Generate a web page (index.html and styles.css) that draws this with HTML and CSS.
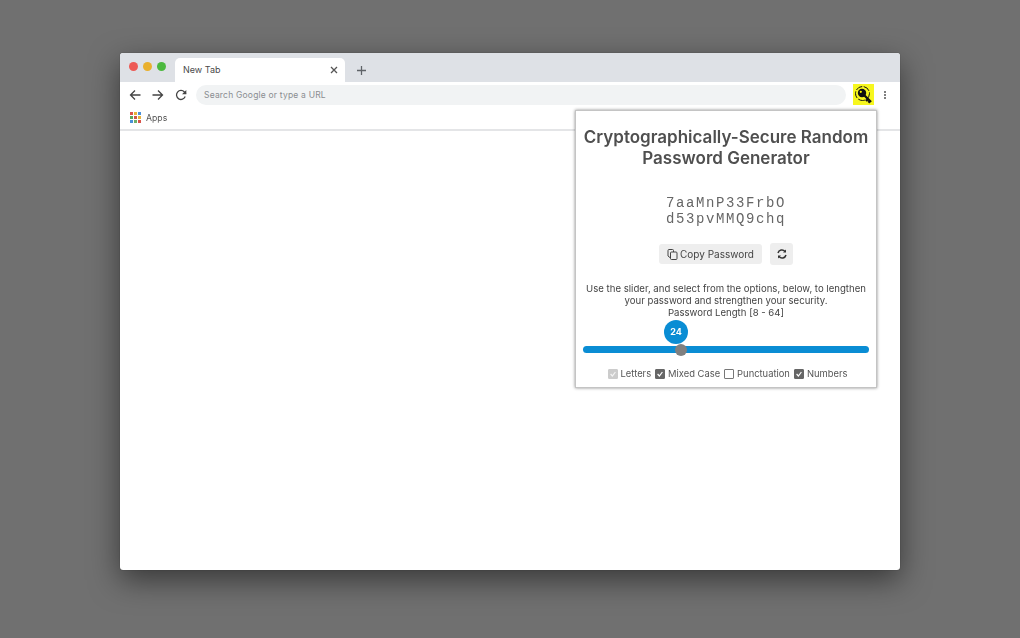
FILE: index.html
```html
<!DOCTYPE html>
<html lang="en">
<head>
    <meta charset="UTF-8">
    <meta name="viewport" content="width=device-width, initial-scale=1.0">
    <title>Password Generator</title>
    <link rel="stylesheet" href="styles.css">
</head>
<body>
    <div class="window">
        <div class="tabstrip">
            <div class="lights">
                <span class="light red"></span>
                <span class="light yellow"></span>
                <span class="light green"></span>
            </div>
            <div class="tab">
                <span class="tab-title">New Tab</span>
                <svg class="tab-close" width="8" height="8" viewBox="0 0 8 8"><path d="M1 1l6 6M7 1L1 7" stroke="#555" stroke-width="1.3"/></svg>
            </div>
            <svg class="new-tab" width="9" height="9" viewBox="0 0 10 10"><path d="M5 0v10M0 5h10" stroke="#5f6368" stroke-width="1.4"/></svg>
        </div>
        <div class="toolbar">
            <svg class="nav-icon" width="12" height="12" viewBox="0 0 12 12"><path d="M11.500 6H1.500M6 1.500L1.500 6 6 10.500" fill="none" stroke="#444" stroke-width="1.3"/></svg>
            <svg class="nav-icon" width="12" height="12" viewBox="0 0 12 12"><path d="M.5 6h10M6 1.500L10.500 6 6 10.500" fill="none" stroke="#444" stroke-width="1.3"/></svg>
            <svg class="nav-icon" width="12" height="12" viewBox="0 0 12 12"><path d="M10.200 7.600A4.500 4.500 0 1 1 9.400 3L11 4.600" fill="none" stroke="#444" stroke-width="1.3"/><path d="M11.300 .9v4.300H7z" fill="#444"/></svg>
            <div class="omnibox">Search Google or type a URL</div>
            <div class="ext-button">
                <svg width="20" height="20" viewBox="0 0 20 20">
                    <circle cx="8.500" cy="8.500" r="7" fill="none" stroke="#111" stroke-width="1" stroke-dasharray="7 1.500"/>
                    <circle cx="8" cy="8" r="4.200" fill="#111"/>
                    <path d="M10 10l7 7M14 14l-2 2M16 16l-1.600 1.600" stroke="#111" stroke-width="2.400" fill="none"/>
                    <circle cx="6.800" cy="6.800" r="1.100" fill="#ff0"/>
                </svg>
            </div>
            <div class="menu-dots"><span></span><span></span><span></span></div>
        </div>
        <div class="bookmarks">
            <div class="apps-grid">
                <span class="c1"></span><span class="c2"></span><span class="c3"></span>
                <span class="c4"></span><span class="c5"></span><span class="c2"></span>
                <span class="c3"></span><span class="c6"></span><span class="c1"></span>
            </div>
            <span class="apps-label">Apps</span>
        </div>
        <div class="popup">
            <h1 class="popup-title">Cryptographically-Secure Random Password Generator</h1>
            <div class="password">7aaMnP33FrbO<br>d53pvMMQ9chq</div>
            <div class="actions">
                <button class="btn btn-copy">
                    <svg width="11" height="11" viewBox="0 0 11 11"><rect x="3.500" y="3" width="6.500" height="7.500" rx="1" fill="none" stroke="#444"/><path d="M6.500 3V1.500A1 1 0 0 0 5.500 .5H2A1 1 0 0 0 1 1.500V7l2.500 2" fill="none" stroke="#444"/></svg>
                    Copy Password
                </button>
                <button class="btn btn-refresh">
                    <svg width="10" height="10" viewBox="0 0 10 10"><path d="M1 4a4 4 0 0 1 7-1.500M9 6a4 4 0 0 1-7 1.500" fill="none" stroke="#333" stroke-width="1.500"/><path d="M9 .5v3H6zM1 9.500v-3h3z" fill="#333"/></svg>
                </button>
            </div>
            <p class="help">Use the slider, and select from the options, below, to lengthen your password and strengthen your security.<br>Password Length [8 - 64]</p>
            <div class="slider">
                <div class="track"></div>
                <div class="thumb"></div>
                <div class="bubble">24</div>
            </div>
            <div class="options">
                <label class="option"><span class="box box-disabled"><svg width="10" height="10" viewBox="0 0 10 10"><path d="M2 5l2.200 2.500L8 2.500" fill="none" stroke="#f4f4f4" stroke-width="1.500"/></svg></span>Letters</label>
                <label class="option"><span class="box box-checked"><svg width="10" height="10" viewBox="0 0 10 10"><path d="M2 5l2.200 2.500L8 2.500" fill="none" stroke="#fff" stroke-width="1.500"/></svg></span>Mixed Case</label>
                <label class="option"><span class="box"></span>Punctuation</label>
                <label class="option"><span class="box box-checked"><svg width="10" height="10" viewBox="0 0 10 10"><path d="M2 5l2.200 2.500L8 2.500" fill="none" stroke="#fff" stroke-width="1.500"/></svg></span>Numbers</label>
            </div>
        </div>
    </div>
</body>
</html>
```

FILE: styles.css
```css
html, body {
    height: 100%;
}

body {
    margin: 0;
    background-color: #707070;
    font-family: 'Inter', 'Liberation Sans', sans-serif;
    overflow: hidden;
}

.window {
    position: relative;
    width: 780px;
    height: 517px;
    margin: 53px 0 0 120px;
    background-color: #fff;
    border-radius: 3px;
    box-shadow: 0 10px 30px rgba(0, 0, 0, 0.5), 0 0 1px #333;
    filter: blur(0.35px);
}

.tabstrip {
    display: flex;
    align-items: flex-end;
    height: 29px;
    background-color: #dee1e6;
    border-radius: 3px 3px 0 0;
}

.lights {
    display: flex;
    align-self: center;
    gap: 5px;
    margin: 0 0 2px 9px;
    width: 46px;
}

.light {
    width: 9px;
    height: 9px;
    border-radius: 50%;
}

.red { background-color: #ed5a55; }
.yellow { background-color: #e9b02d; }
.green { background-color: #4cb93f; }

.tab {
    display: flex;
    align-items: center;
    justify-content: space-between;
    box-sizing: border-box;
    width: 170px;
    height: 24px;
    padding: 0 7px 0 8px;
    background-color: #fff;
    border-radius: 5px 5px 0 0;
}

.tab-title {
    margin-bottom: 2px;
    font-size: 9px;
    color: #4a4a4a;
}

.new-tab {
    align-self: center;
    margin: 5px 0 0 12px;
}

.toolbar {
    display: flex;
    align-items: center;
    height: 26px;
    padding: 0 14px 0 9px;
}

.nav-icon {
    margin-right: 11px;
    flex-shrink: 0;
}

.nav-icon:nth-child(3) {
    margin-right: 9px;
}

.omnibox {
    flex: 1;
    height: 20px;
    line-height: 20px;
    padding-left: 8px;
    background-color: #f1f3f4;
    border-radius: 10px;
    font-size: 8.500px;
    letter-spacing: 0.2px;
    color: #8a8d91;
}

.ext-button {
    display: flex;
    align-items: center;
    justify-content: center;
    width: 21px;
    height: 21px;
    margin: 0 0 1px 7px;
    background-color: #f7f71e;
}

.menu-dots {
    display: flex;
    flex-direction: column;
    gap: 1px;
    margin-left: 10px;
}

.menu-dots span {
    width: 2px;
    height: 2px;
    background-color: #555;
    border-radius: 50%;
}

.bookmarks {
    display: flex;
    align-items: center;
    gap: 5px;
    height: 19px;
    padding: 0 0 2px 10px;
    border-bottom: 2px solid #e4e5e7;
}

.apps-grid {
    display: grid;
    grid-template-columns: repeat(3, 3px);
    grid-auto-rows: 3px;
    gap: 1px;
}

.c1 { background-color: #d9534a; }
.c2 { background-color: #e8b13a; }
.c3 { background-color: #4a90d9; }
.c4 { background-color: #58a55c; }
.c5 { background-color: #c9564c; }
.c6 { background-color: #6fae6a; }

.apps-label {
    font-size: 8.700px;
    color: #555;
}

/* popup hangs over the page from the extension button */
.popup {
    position: absolute;
    top: 57px;
    left: 455px;
    box-sizing: border-box;
    width: 302px;
    height: 278px;
    padding: 16px 8px 0;
    background-color: #fff;
    border: 1px solid #c4c4c4;
    box-shadow: 0 0 3px rgba(0, 0, 0, 0.45);
    text-align: center;
    color: #333;
}

.popup-title {
    margin: 0 -4px;
    font-size: 17px;
    line-height: 21px;
    font-weight: 600;
    color: #4f4f4f;
}

.password {
    margin-top: 26px;
    font-family: 'Liberation Mono', monospace;
    font-size: 14px;
    line-height: 16px;
    letter-spacing: 1.600px;
    color: #666;
}

.actions {
    display: flex;
    justify-content: center;
    align-items: center;
    gap: 8px;
    margin-top: 16px;
}

.btn {
    display: flex;
    align-items: center;
    justify-content: center;
    gap: 2px;
    border: none;
    padding: 0;
    background-color: #eeeeee;
    border-radius: 3px;
    font-family: inherit;
    font-size: 10px;
    color: #444;
}

.btn-copy {
    width: 103px;
    height: 20px;
}

.btn-refresh {
    width: 23px;
    height: 22px;
}

.help {
    margin: 18px 0 0;
    font-size: 9.600px;
    line-height: 12px;
    color: #444;
}

.slider {
    position: relative;
    height: 34px;
    margin: 0 -1px;
}

.track {
    position: absolute;
    left: 0;
    right: 0;
    bottom: 0;
    height: 7px;
    background-color: #0a8dd4;
    border-radius: 3.500px;
}

.thumb {
    position: absolute;
    left: 92px;
    bottom: -3px;
    width: 12px;
    height: 12px;
    background-color: #808080;
    border-radius: 50%;
}

.bubble {
    position: absolute;
    left: 81px;
    bottom: 9px;
    width: 24px;
    height: 24px;
    line-height: 24px;
    background-color: #0a8dd4;
    border-radius: 50%;
    color: #fff;
    font-size: 9px;
    font-weight: 700;
}

.options {
    display: flex;
    justify-content: center;
    gap: 4px;
    margin-top: 15px;
    padding-left: 3px;
    font-size: 9.400px;
    color: #555;
}

.option {
    display: flex;
    align-items: center;
    gap: 3px;
}

.box {
    display: flex;
    align-items: center;
    justify-content: center;
    box-sizing: border-box;
    width: 10px;
    height: 10px;
    border: 1px solid #777;
    border-radius: 1px;
    background-color: #fff;
}

.box-disabled {
    border-color: #ccc;
    background-color: #ccc;
}

.box-checked {
    border-color: #666;
    background-color: #666;
}
```
